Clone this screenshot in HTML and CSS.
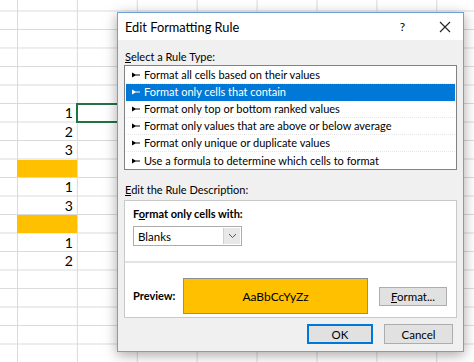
FILE: index.html
```html
<!DOCTYPE html>
<html lang="en">

<head>
    <meta charset="UTF-8">
    <title>Edit Formatting Rule</title>
    <link rel="stylesheet" href="styles.css">
</head>

<body>
    <div class="sheet">
        <div class="num" style="grid-row: 7">1</div>
        <div class="selected-cell"></div>
        <div class="num" style="grid-row: 8">2</div>
        <div class="num" style="grid-row: 9">3</div>
        <div class="fill" style="grid-row: 10"></div>
        <div class="num" style="grid-row: 11">1</div>
        <div class="num" style="grid-row: 12">3</div>
        <div class="fill" style="grid-row: 13"></div>
        <div class="num" style="grid-row: 14">1</div>
        <div class="num" style="grid-row: 15">2</div>
    </div>

    <div class="dialog">
        <div class="titlebar">
            <span class="title">Edit Formatting Rule</span>
            <span class="help">?</span>
            <svg class="close" width="12" height="12" viewBox="0 0 12 12">
                <path d="M1 1 L11 11 M11 1 L1 11" stroke="#222" stroke-width="1.1" fill="none" />
            </svg>
        </div>

        <div class="dialog-body">
            <div class="label"><u>S</u>elect a Rule Type:</div>
            <div class="listbox">
                <div class="item"><svg class="arrow" width="8" height="6" viewBox="0 0 8 6"><path d="M0 0.5 L0 5.5 L3.5 3.5 L8 3.5 L8 2.5 L3.5 2.5 Z" /></svg>Format all cells based on their values</div>
                <div class="item active"><svg class="arrow" width="8" height="6" viewBox="0 0 8 6"><path d="M0 0.5 L0 5.5 L3.5 3.5 L8 3.5 L8 2.5 L3.5 2.5 Z" /></svg>Format only cells that contain</div>
                <div class="item"><svg class="arrow" width="8" height="6" viewBox="0 0 8 6"><path d="M0 0.5 L0 5.5 L3.5 3.5 L8 3.5 L8 2.5 L3.5 2.5 Z" /></svg>Format only top or bottom ranked values</div>
                <div class="item"><svg class="arrow" width="8" height="6" viewBox="0 0 8 6"><path d="M0 0.5 L0 5.5 L3.5 3.5 L8 3.5 L8 2.5 L3.5 2.5 Z" /></svg>Format only values that are above or below average</div>
                <div class="item"><svg class="arrow" width="8" height="6" viewBox="0 0 8 6"><path d="M0 0.5 L0 5.5 L3.5 3.5 L8 3.5 L8 2.5 L3.5 2.5 Z" /></svg>Format only unique or duplicate values</div>
                <div class="item last"><svg class="arrow" width="8" height="6" viewBox="0 0 8 6"><path d="M0 0.5 L0 5.5 L3.5 3.5 L8 3.5 L8 2.5 L3.5 2.5 Z" /></svg>Use a formula to determine which cells to format</div>
            </div>

            <div class="label desc-label"><u>E</u>dit the Rule Description:</div>
            <div class="desc-box">
                <div class="desc-top">
                    <div class="bold">F<u>o</u>rmat only cells with:</div>
                    <div class="combo">
                        <span>Blanks</span>
                        <span class="combo-btn">
                            <svg width="9" height="6" viewBox="0 0 9 6">
                                <path d="M1 1 L4.5 4.5 L8 1" stroke="#555" stroke-width="1" fill="none" />
                            </svg>
                        </span>
                    </div>
                </div>
                <div class="desc-bottom">
                    <span class="bold preview-label">Preview:</span>
                    <div class="preview">AaBbCcYyZz</div>
                    <button class="btn format-btn"><u>F</u>ormat...</button>
                </div>
            </div>

            <div class="buttons">
                <button class="btn ok">OK</button>
                <button class="btn cancel">Cancel</button>
            </div>
        </div>
    </div>
</body>

</html>
```

FILE: styles.css
```css
body,
html {
    margin: 0;
    padding: 0;
    height: 100%;
    overflow: hidden;
    background: #fff;
}

body {
    position: relative;
    font-family: Lato, "Open Sans", sans-serif;
    font-size: 11px;
    color: #000;
}

/* spreadsheet behind the dialog */
.sheet {
    height: 362px;
    display: grid;
    grid-template-columns: 17px repeat(8, 59.9px);
    grid-template-rows: 10.5px repeat(19, 18.5px);
    background-image:
        linear-gradient(to right, #dadada 1px, transparent 1px),
        linear-gradient(to bottom, #dadada 1px, transparent 1px);
    background-size: 59.9px 100%, 100% 18.5px;
    background-position: 17px 0, 0 10.5px;
    font-size: 14px;
}

.num {
    grid-column: 2;
    text-align: right;
    padding-right: 4px;
    line-height: 19px;
}

.fill {
    grid-column: 2;
    background: #ffc000;
    margin-top: 1px;
}

.selected-cell {
    grid-column: 3;
    grid-row: 7;
    border: 2px solid #217346;
    margin: 0 0 -1px -1px;
}

/* dialog */
.dialog {
    position: absolute;
    left: 117px;
    top: 12px;
    width: 345px;
    height: 338px;
    border: 1px solid #6ea1d6;
    background: #f0f0f0;
    box-shadow: 0 3px 12px rgba(0, 0, 0, 0.35);
    display: flex;
    flex-direction: column;
}

.titlebar {
    height: 27px;
    background: #fff;
    display: flex;
    align-items: center;
    padding-left: 7px;
    font-size: 12.8px;
}

.title {
    flex-grow: 1;
}

.help {
    margin-right: 34px;
    font-size: 12px;
}

.close {
    margin-right: 12px;
}

.dialog-body {
    padding: 9px 6px 0;
    display: flex;
    flex-direction: column;
}

.label {
    height: 16px;
    line-height: 16px;
    padding-left: 1px;
}

.listbox {
    background: #fff;
    border: 1px solid #828282;
    padding: 1px 1px 0;
}

.item {
    height: 17px;
    line-height: 16px;
    padding-left: 6px;
    border-bottom: 1px dotted #e6e6e6;
    box-sizing: border-box;
    display: flex;
    align-items: center;
    white-space: nowrap;
}

.item.last {
    border-bottom: none;
}

.item.active {
    background: #0078d7;
    color: #fff;
    border-bottom-color: #0078d7;
}

.arrow {
    margin-right: 4px;
    fill: #000;
}

.item.active .arrow {
    fill: #fff;
}

.desc-label {
    margin-top: 12px;
}

.desc-box {
    margin-top: 2px;
    height: 116px;
    background: #fff;
    border: 1px solid #c9c9c9;
    display: flex;
    flex-direction: column;
}

.desc-top {
    padding: 5px 8px 0;
    height: 55px;
    border-bottom: 2px solid #e3e3e3;
}

.bold {
    font-weight: bold;
    font-size: 11px;
    line-height: 16px;
}

.combo {
    margin-top: 4px;
    width: 103px;
    height: 18px;
    border: 1px solid #adadad;
    background: #fff;
    display: flex;
    align-items: center;
    justify-content: space-between;
    padding-left: 4px;
    font-size: 11.5px;
}

.combo-btn {
    width: 16px;
    height: 16px;
    margin-right: 1px;
    background: #e8e8e8;
    border-left: 1px solid #d0d0d0;
    display: flex;
    align-items: center;
    justify-content: center;
}

.desc-bottom {
    padding: 15px 9px 0 8px;
    display: flex;
    align-items: center;
}

.preview-label {
    width: 50px;
}

.preview {
    width: 183px;
    height: 34px;
    background: #ffc000;
    border: 1px solid #8f8f8f;
    display: flex;
    align-items: center;
    justify-content: center;
    font-size: 12px;
}

.btn {
    font-family: Lato, "Open Sans", sans-serif;
    font-size: 11.5px;
    background: #e1e1e1;
    border: 1px solid #adadad;
    height: 20px;
    padding: 0;
    color: #000;
}

.format-btn {
    width: 68px;
    margin-left: 11px;
    height: 19px;
}

.buttons {
    margin-top: 6px;
    display: flex;
    justify-content: flex-end;
    gap: 11px;
    padding-right: 4px;
}

.btn.ok {
    width: 66px;
    border: 1px solid #0078d7;
    box-shadow: inset 0 0 0 1px #0078d7;
}

.btn.cancel {
    width: 69px;
}
```
